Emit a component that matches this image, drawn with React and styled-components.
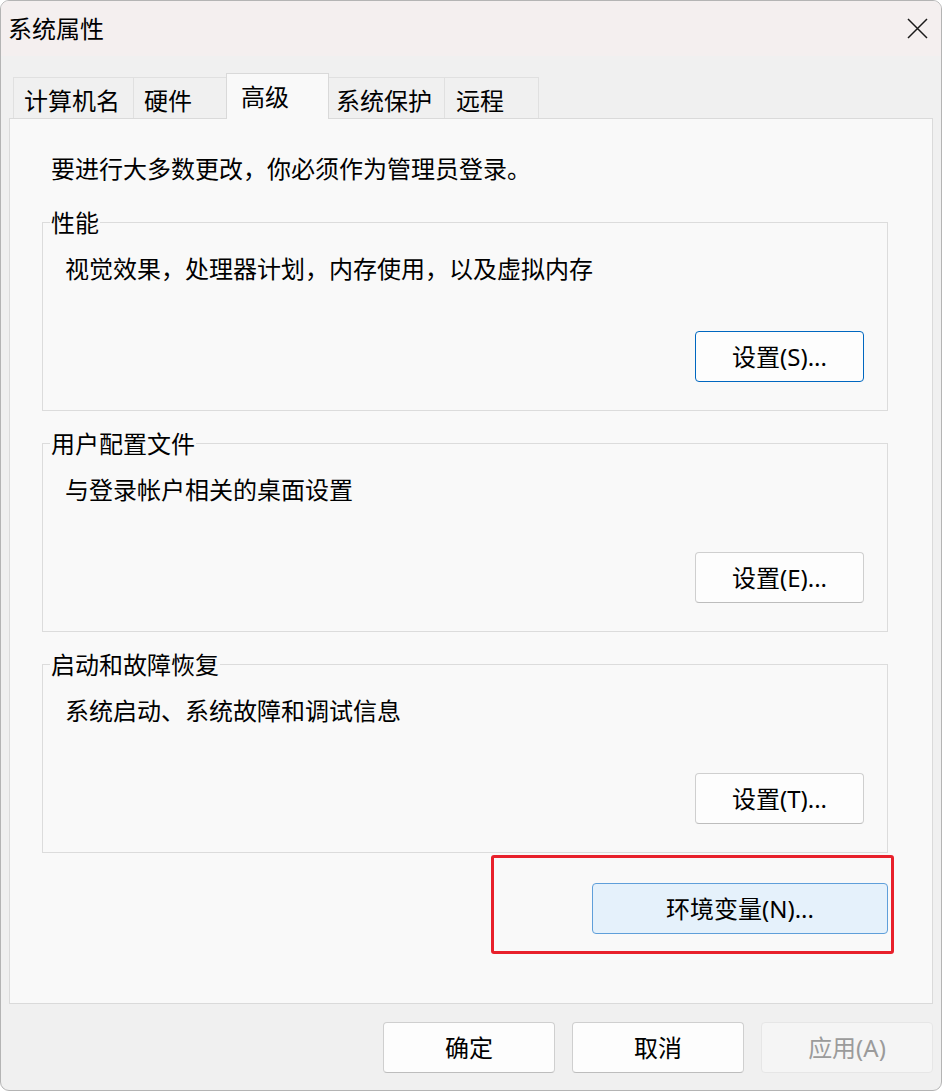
import React from 'react';
import styled, { createGlobalStyle } from 'styled-components';

const GlobalStyle = createGlobalStyle`
  html, body {
    margin: 0;
    padding: 0;
    background: #ffffff;
  }
  * {
    box-sizing: border-box;
  }
`;

const FONT = `"Segoe UI", "Noto Sans", "Noto Sans CJK SC", sans-serif`;

const tabs = [
  { text: '计算机名', width: 121, pad: 10 },
  { text: '硬件', width: 94, pad: 10 },
  { text: '高级', width: 103, pad: 14, active: true },
  { text: '系统保护', width: 117, pad: 7 },
  { text: '远程', width: 95, pad: 11 },
];

const groups = [
  { title: '性能', desc: '视觉效果，处理器计划，内存使用，以及虚拟内存', button: '设置(S)...', primary: true },
  { title: '用户配置文件', desc: '与登录帐户相关的桌面设置', button: '设置(E)...' },
  { title: '启动和故障恢复', desc: '系统启动、系统故障和调试信息', button: '设置(T)...' },
];

export default function App() {
  return (
    <>
      <GlobalStyle />
      <Window>
        <TitleBar>
          <Title>系统属性</Title>
          <CloseButton aria-label="关闭">
            <svg width="21" height="21" viewBox="0 0 21 21">
              <path d="M1 1 L20 20 M20 1 L1 20" stroke="#1a1a1a" strokeWidth="1.5" fill="none" />
            </svg>
          </CloseButton>
        </TitleBar>
        <Body>
          <TabStrip>
            {tabs.map((tab, i) => (
              <Tab key={tab.text} $width={tab.width} $pad={tab.pad} $active={tab.active} $first={i === 0}>
                {tab.text}
              </Tab>
            ))}
          </TabStrip>
          <Panel>
            <Notice>要进行大多数更改，你必须作为管理员登录。</Notice>
            {groups.map((g) => (
              <GroupBox key={g.title}>
                <Legend>{g.title}</Legend>
                <Desc>{g.desc}</Desc>
                <ButtonRow>
                  <Button $primary={g.primary} $width={169}>{g.button}</Button>
                </ButtonRow>
              </GroupBox>
            ))}
            <EnvRow>
              <Marked>
                <Button $hover $width={296}>环境变量(N)...</Button>
                <Highlight />
              </Marked>
            </EnvRow>
          </Panel>
          <Footer>
            <Button $width={172}>确定</Button>
            <Button $width={172}>取消</Button>
            <Button $width={172} disabled>应用(A)</Button>
          </Footer>
        </Body>
      </Window>
    </>
  );
}

let Window = styled.div`
  width: 942px;
  height: 1091px;
  border: 1px solid #b4b4b4;
  border-radius: 9px;
  overflow: hidden;
  background: #f0f0f0;
  font-family: ${FONT};
  font-size: 24px;
  color: #000;
`;

let TitleBar = styled.div`
  height: 55px;
  display: flex;
  align-items: center;
  justify-content: space-between;
  padding: 0 13px 0 7px;
  background: #f4efef;
`;

let Title = styled.div`
  line-height: 30px;
`;

let CloseButton = styled.div`
  display: flex;
  align-items: center;
  justify-content: center;
  width: 22px;
  height: 22px;
`;

let Body = styled.div`
  padding: 17px 0 0 8px;
`;

let TabStrip = styled.div`
  display: flex;
  align-items: flex-end;
  height: 45px;
  padding-left: 4px;
`;

let Tab = styled.div`
  position: relative;
  width: ${(p) => p.$width}px;
  height: ${(p) => (p.$active ? 46 : 41)}px;
  margin-left: ${(p) => (p.$first ? 0 : -1)}px;
  margin-bottom: ${(p) => (p.$active ? -1 : 0)}px;
  z-index: ${(p) => (p.$active ? 2 : 1)};
  padding: ${(p) => (p.$active ? '0 0 2px' : '3px 0 0')} ${(p) => p.$pad}px;
  display: flex;
  align-items: center;
  background: ${(p) => (p.$active ? '#f9f9f9' : '#f0f0f0')};
  border: 1px solid ${(p) => (p.$active ? '#d9d9d9' : '#e0e0e0')};
  border-bottom: none;
  white-space: nowrap;
`;

let Panel = styled.div`
  width: 924px;
  height: 886px;
  border: 1px solid #dadada;
  background: #f9f9f9;
  padding: 34px 44px 0 32px;
`;

let Notice = styled.div`
  line-height: 32px;
  padding-left: 9px;
  margin-bottom: 37px;
`;

let GroupBox = styled.div`
  border: 1px solid #dcdcdc;
  padding: 0 23px 28px 22px;
  & + & {
    margin-top: 32px;
  }
`;

let Legend = styled.div`
  display: table;
  margin: -15px 0 0 -15px;
  padding: 0 1px;
  line-height: 30px;
  background: #f9f9f9;
`;

let Desc = styled.div`
  line-height: 30px;
  margin-top: 16px;
`;

let ButtonRow = styled.div`
  display: flex;
  justify-content: flex-end;
  margin-top: 47px;
`;

let EnvRow = styled.div`
  display: flex;
  justify-content: flex-end;
  margin-top: 30px;
`;

let Marked = styled.div`
  position: relative;
  display: flex;
`;

let Highlight = styled.span`
  position: absolute;
  left: -101px;
  right: -6px;
  top: -28px;
  bottom: -20px;
  border: 3px solid #e8202b;
  border-radius: 3px;
  pointer-events: none;
`;

let Button = styled.button`
  width: ${(p) => p.$width}px;
  height: 51px;
  font-family: ${FONT};
  font-size: 24px;
  color: #000;
  border-radius: 4px;
  border: 1px solid ${(p) => (p.$primary ? '#0067c0' : p.$hover ? '#5f9fda' : '#cfcfcf')};
  border-bottom-color: ${(p) => (p.$primary ? '#0067c0' : p.$hover ? '#5f9fda' : '#bdbdbd')};
  background: ${(p) => (p.$hover ? '#e5f1fb' : '#fdfdfd')};
  padding: 0;
  line-height: 1;

  &:disabled {
    background: #f5f5f5;
    border-color: #e6e6e6;
    color: #9b9b9b;
  }
`;

let Footer = styled.div`
  width: 924px;
  display: flex;
  justify-content: flex-end;
  gap: 17px;
  margin-top: 18px;
`;
